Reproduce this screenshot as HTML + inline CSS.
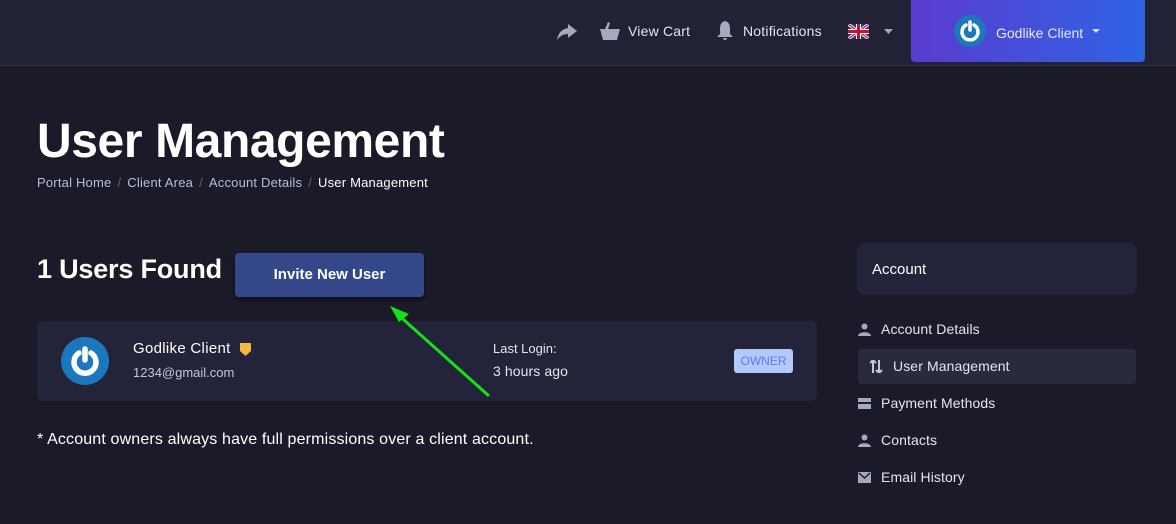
<!DOCTYPE html>
<html><head><meta charset="utf-8"><style>
*{margin:0;padding:0;box-sizing:border-box}
body{width:1176px;height:524px;overflow:hidden;background:#1b1a29;font-family:"Liberation Sans",sans-serif;color:#e6e8f0;position:relative}
.hdr{position:absolute;left:0;top:0;width:1176px;height:66px;background:#222236;border-bottom:1px solid #34344a}
.a{position:absolute}
.nav{font-size:14px;color:#e2e4ee;top:23px;letter-spacing:0.2px}
.ic{fill:#a4a9bf}
.user{position:absolute;left:911px;top:0;width:234px;height:62px;border-radius:0 0 4px 4px;background:linear-gradient(90deg,#5a3bcf,#2f63e4)}
.av{border-radius:50%;background:#1c78bd;display:flex;align-items:center;justify-content:center}
h1{position:absolute;left:37px;top:114px;font-size:48px;font-weight:bold;color:#fff;letter-spacing:-0.4px}
.bc{position:absolute;left:37px;top:175px;font-size:13px;color:#b8bfd6;letter-spacing:0.2px}
.bc span{color:#5c6078;margin:0 6px}
.card{position:absolute;left:37px;top:321px;width:780px;height:80px;background:#232339;border-radius:6px}
.side{position:absolute;left:857px;top:243px;width:280px;height:52px;background:#232339;border-radius:8px;font-size:15px;padding:18px 15px;color:#fff}
.si{position:absolute;left:858px;font-size:14px;color:#e4e6ee;display:flex;align-items:center;letter-spacing:0.1px}
.si svg{margin-right:10px}
</style></head><body>
<div class="hdr"></div>
<svg class="a" style="left:557px;top:24px" width="20" height="16" viewBox="0 0 20 16"><path class="ic" d="M11 0 L20 7 L11 14 V10 C6 10 3 12 0 16 C1 9 5 5 11 4 Z"/></svg>
<svg class="a" style="left:599px;top:21px" width="22" height="20" viewBox="0 0 22 20"><path class="ic" d="M1 8 H21 L18 19 H4 Z M6 8 L9 1 L11 2 L9 8 Z"/></svg>
<div class="a nav" style="left:628px">View Cart</div>
<svg class="a" style="left:716px;top:21px" width="18" height="20" viewBox="0 0 18 20"><path class="ic" d="M9 0 C13 1 14 4 14 8 V13 L17 16 H1 L4 13 V8 C4 4 5 1 9 0 Z M7 17 H11 A2 2 0 0 1 7 17 Z"/></svg>
<div class="a nav" style="left:743px">Notifications</div>
<svg class="a" style="left:848px;top:24px" width="21" height="15" viewBox="0 0 21 15"><rect width="21" height="15" fill="#1e3a8a"/><path d="M0 0L21 15M21 0L0 15" stroke="#fff" stroke-width="3"/><path d="M0 0L21 15M21 0L0 15" stroke="#c8102e" stroke-width="1.2"/><path d="M10.5 0V15M0 7.5H21" stroke="#fff" stroke-width="5"/><path d="M10.5 0V15M0 7.5H21" stroke="#c8102e" stroke-width="3"/></svg>
<svg class="a" style="left:884px;top:29px" width="9" height="5"><path d="M0 0H9L4.5 5Z" fill="#a4a9bf"/></svg>
<div class="user"></div>
<div class="a av" style="left:954px;top:15px;width:32px;height:32px"><svg width="22" height="22" viewBox="0 0 22 22"><path d="M7 5 A8 8 0 1 0 15 5" fill="none" stroke="#fff" stroke-width="3.5" stroke-linecap="round"/><path d="M11 2V10" stroke="#fff" stroke-width="3.5" stroke-linecap="round"/></svg></div>
<div class="a" style="left:996px;top:25px;font-size:14px;color:#e6e8f5">Godlike Client</div>
<svg class="a" style="left:1092px;top:29px" width="8" height="4"><path d="M0 0H8L4 4Z" fill="#d8dcf0"/></svg>

<h1>User Management</h1>
<div class="bc">Portal Home<span>/</span>Client Area<span>/</span>Account Details<span>/</span><b style="font-weight:normal;color:#fff">User Management</b></div>

<div class="a" style="left:37px;top:254px;font-size:27px;font-weight:bold;color:#fff;letter-spacing:-0.2px">1 Users Found</div>
<div class="a" style="left:235px;top:253px;width:189px;height:44px;background:#344889;border-radius:4px;box-shadow:0 3px 5px rgba(0,0,0,.4);font-size:15px;font-weight:bold;color:#fff;text-align:center;line-height:44px">Invite New User</div>

<div class="card"></div>
<div class="a av" style="left:61px;top:337px;width:48px;height:48px"><svg width="32" height="32" viewBox="0 0 32 32"><path d="M10 8 A11 11 0 1 0 22 8" fill="none" stroke="#fff" stroke-width="5.5" stroke-linecap="round"/><path d="M16 4V15" stroke="#fff" stroke-width="5.5" stroke-linecap="round"/></svg></div>
<div class="a" style="left:133px;top:340px;font-size:15px;color:#fff;letter-spacing:0.3px">Godlike Client</div>
<svg class="a" style="left:240px;top:343px" width="11" height="13"><path d="M0 0H11V8L5.5 13L0 8Z" fill="#f5b942"/></svg>
<div class="a" style="left:133px;top:365px;font-size:13px;color:#c2c6d8">1234@gmail.com</div>
<div class="a" style="left:493px;top:341px;font-size:13px;color:#e4e6ee">Last Login:</div>
<div class="a" style="left:493px;top:363px;font-size:14px;color:#e4e6ee;letter-spacing:0.1px">3 hours ago</div>
<div class="a" style="left:734px;top:349px;width:59px;height:24px;background:#b3c8fb;border-radius:3px;color:#5b7ef0;font-size:12px;text-align:center;line-height:24px">OWNER</div>

<svg class="a" style="left:385px;top:300px" width="110" height="100"><path d="M104 96 L10 12" stroke="#16e016" stroke-width="3"/><path d="M5 6 L24 14 L14 22 Z" fill="#16e016"/></svg>

<div class="a" style="left:37px;top:431px;font-size:16px;color:#fff;letter-spacing:0.15px">* Account owners always have full permissions over a client account.</div>

<div class="side">Account</div>
<div class="si" style="top:321px"><svg width="13" height="13" viewBox="0 0 13 13"><circle cx="6.5" cy="3.5" r="3" fill="#a4a9bf"/><path d="M0 13 C0 8 13 8 13 13Z" fill="#a4a9bf"/></svg>Account Details</div>
<div class="a" style="left:858px;top:349px;width:278px;height:35px;background:#2a2a3e;border-radius:4px"></div>
<div class="si" style="top:358px;left:870px"><svg width="13" height="13" viewBox="0 0 13 13"><path d="M3 0V13M0 3L3 0L6 3M9 0V13M6 10L9 13L12 10" stroke="#c4c8da" stroke-width="2" fill="none"/></svg>User Management</div>
<div class="si" style="top:395px"><svg width="13" height="13" viewBox="0 0 13 13"><rect y="1" width="13" height="4" fill="#a4a9bf"/><rect y="7" width="13" height="5" fill="#a4a9bf"/></svg>Payment Methods</div>
<div class="si" style="top:432px"><svg width="13" height="13" viewBox="0 0 13 13"><circle cx="6.5" cy="3.5" r="3" fill="#a4a9bf"/><path d="M0 13 C0 8 13 8 13 13Z" fill="#a4a9bf"/></svg>Contacts</div>
<div class="si" style="top:469px"><svg width="13" height="13" viewBox="0 0 13 13"><rect y="1" width="13" height="11" fill="#a4a9bf"/><path d="M1 2L6.5 7L12 2" stroke="#1b1a29" stroke-width="1.5" fill="none"/></svg>Email History</div>
</body></html>
